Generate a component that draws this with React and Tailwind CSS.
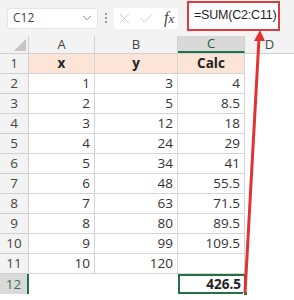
import React from "react";
import { X, Check, ChevronDown } from "lucide-react";

const rows = [
  ["1", "x", "y", "Calc"],
  ["2", "1", "3", "4"],
  ["3", "2", "5", "8.5"],
  ["4", "3", "12", "18"],
  ["5", "4", "24", "29"],
  ["6", "5", "34", "41"],
  ["7", "6", "48", "55.5"],
  ["8", "7", "63", "71.5"],
  ["9", "8", "80", "89.5"],
  ["10", "9", "99", "109.5"],
  ["11", "10", "120", ""],
];

function App() {
  return (
    <div className="relative w-[294px] h-[300px] overflow-hidden bg-white font-['Open_Sans',sans-serif] text-[#333]">
      {/* formula bar */}
      <div className="flex items-center h-[36px] bg-[#f3f3f3]">
        <div className="ml-[7px] w-[91px] h-[21px] bg-white rounded-[3px] border border-[#e4e4e4] flex items-center justify-between pl-[5px] pr-[3px]">
          <span className="text-[12px] text-[#444]">C12</span>
          <ChevronDown size={14} strokeWidth={1.4} className="text-[#777]" />
        </div>
        <div className="ml-[7px] w-[3px] flex flex-col gap-[2px]">
          <span className="w-[2px] h-[2px] bg-[#9a9a9a]" />
          <span className="w-[2px] h-[2px] bg-[#9a9a9a]" />
          <span className="w-[2px] h-[2px] bg-[#9a9a9a]" />
        </div>
        <div className="ml-[6px] w-[64px] h-[21px] bg-white rounded-[3px] flex items-center pl-[2px] gap-[5px]">
          <X size={17} strokeWidth={1} className="text-[#b8b8b8]" />
          <Check size={17} strokeWidth={1} className="text-[#b8b8b8]" />
          <span className="ml-[4px] font-['Liberation_Serif',serif] italic text-[16px] text-[#444] leading-none">
            f<span className="text-[13px]">x</span>
          </span>
        </div>
        <div className="ml-[9px] mb-[5px] w-[93px] h-[30px] bg-white border-2 border-[#dc3b3b] flex items-center pl-[5px]">
          <span className="font-['Liberation_Sans',sans-serif] text-[12.5px] text-[#222] tracking-[-0.2px]">=SUM(C2:C11)</span>
        </div>
      </div>

      {/* column headers */}
      <div className="flex h-[18px] bg-[#f3f3f3] border-b border-[#d0d0d0] text-[13px] text-[#444]">
        <div className="relative w-[29px] border-r border-[#d0d0d0]">
          <div className="absolute right-[2px] bottom-[2px] w-0 h-0 border-l-[12px] border-l-transparent border-b-[12px] border-b-[#c4c4c4]" />
        </div>
        <div className="w-[66px] border-r border-[#d0d0d0] flex items-center justify-center">A</div>
        <div className="w-[83px] border-r border-[#d0d0d0] flex items-center justify-center">B</div>
        <div className="w-[67px] border-r border-[#d0d0d0] bg-[#d9d9d9] border-b-2 border-b-[#217346] flex items-center justify-center text-[#1f5f3a]">C</div>
        <div className="flex-1 flex items-center justify-center">D</div>
      </div>

      {/* rows */}
      {rows.map((r, i) => {
        const head = i === 0;
        const cell = head
          ? "bg-[#fce4d6] font-bold justify-center text-[#222]"
          : "justify-end pr-[4px]";
        return (
          <div key={i} className="flex h-[20px] text-[13.5px]">
            <div className="w-[29px] bg-[#f3f3f3] border-r border-b border-[#d0d0d0] flex items-center justify-center text-[#444]">{r[0]}</div>
            <div className={`w-[66px] border-r border-b border-[#d4d4d4] flex items-center ${cell}`}>{r[1]}</div>
            <div className={`w-[83px] border-r border-b border-[#d4d4d4] flex items-center ${cell}`}>{r[2]}</div>
            <div className={`w-[67px] border-r border-b border-[#d4d4d4] flex items-center ${cell}`}>{r[3]}</div>
            <div className="flex-1" />
          </div>
        );
      })}
      <div className="flex h-[20px] text-[13.5px]">
        <div className="w-[29px] bg-[#d9d9d9] border-r-2 border-[#217346] flex items-center justify-center text-[#4a6a55]">12</div>
        <div className="w-[148px]" />
        <div className="relative w-[68px] ml-[1px] border-2 border-[#217346] flex items-center justify-end pr-[3px] font-bold text-[#222]">
          426.5
          <div className="absolute right-[-4px] bottom-[-4px] w-[5px] h-[5px] bg-[#217346] border border-white" />
        </div>
      </div>

      {/* annotation arrow */}
      <svg className="absolute left-0 top-0 pointer-events-none" width="294" height="300">
        <line x1="245" y1="293" x2="259" y2="38" stroke="#e03434" strokeWidth="3" />
        <polygon points="260,30 254,41 265,41" fill="#e03434" />
      </svg>
    </div>
  );
}

export default App;
